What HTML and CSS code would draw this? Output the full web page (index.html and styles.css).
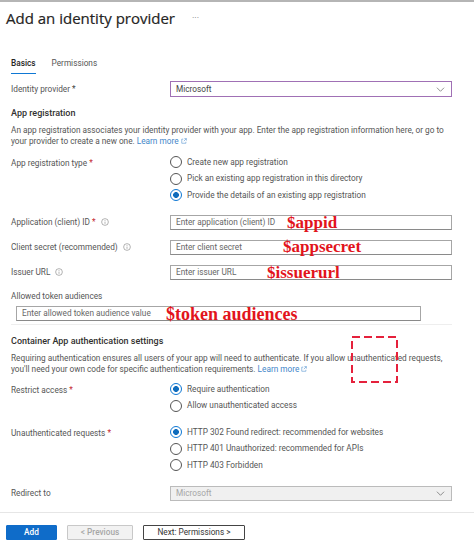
FILE: index.html
```html
<!DOCTYPE html>
<html lang="en">
<head>
<meta charset="utf-8">
<title>Add an identity provider</title>
<link rel="stylesheet" href="styles.css">
</head>
<body>
<div class="topline"></div>
<header class="title-row">
  <h1>Add an identity provider</h1>
  <span class="dots">···</span>
</header>
<main class="content">
  <nav class="tabs">
    <span class="tab active">Basics</span>
    <span class="tab">Permissions</span>
  </nav>

  <div class="row row-provider">
    <label class="lbl">Identity provider <b class="dark">*</b></label>
    <div class="field select"><span>Microsoft</span>
      <svg class="chev" viewBox="0 0 12 7"><path d="M1 1l5 5 5-5"/></svg></div>
  </div>

  <h2 class="h-app">App registration</h2>
  <p class="desc">An app registration associates your identity provider with your app. Enter the app registration information here, or go to your provider to create a new one. <a>Learn more <svg class="ext" viewBox="0 0 8 8"><path d="M3 1.500H1v5.500h5.500V5M4.500.8h2.700v2.700M7 1L3.800 4.200"/></svg></a></p>

  <div class="row row-type">
    <label class="lbl">App registration type <b>*</b></label>
    <div class="radios">
      <div class="radio"><i></i>Create new app registration</div>
      <div class="radio"><i></i>Pick an existing app registration in this directory</div>
      <div class="radio on"><i></i>Provide the details of an existing app registration</div>
    </div>
  </div>

  <div class="row row-input r1">
    <label class="lbl">Application (client) ID <b>*</b> <svg class="info" viewBox="0 0 10 10"><circle cx="5" cy="5" r="4.200"/><path d="M5 4.500v2.800M5 2.500v1"/></svg></label>
    <div class="field"><span class="ph">Enter application (client) ID</span><span class="note n1">$appid</span></div>
  </div>
  <div class="row row-input r2">
    <label class="lbl">Client secret (recommended) <svg class="info" viewBox="0 0 10 10"><circle cx="5" cy="5" r="4.200"/><path d="M5 4.500v2.800M5 2.500v1"/></svg></label>
    <div class="field"><span class="ph">Enter client secret</span><span class="note n2">$appsecret</span></div>
  </div>
  <div class="row row-input r3">
    <label class="lbl">Issuer URL <svg class="info" viewBox="0 0 10 10"><circle cx="5" cy="5" r="4.200"/><path d="M5 4.500v2.800M5 2.500v1"/></svg></label>
    <div class="field"><span class="ph">Enter issuer URL</span><span class="note n3">$issuerurl</span></div>
  </div>

  <label class="lbl lbl-aud">Allowed token audiences</label>
  <div class="field aud"><span class="ph">Enter allowed token audience value</span><span class="note n4">$token audiences</span></div>
  <div class="rule"></div>

  <h2 class="h-auth">Container App authentication settings</h2>
  <div class="desc-wrap">
    <p class="desc">Requiring authentication ensures all users of your app will need to authenticate. If you allow unauthenticated requests, you'll need your own code for specific authentication requirements. <a>Learn more <svg class="ext" viewBox="0 0 8 8"><path d="M3 1.500H1v5.500h5.500V5M4.500.8h2.700v2.700M7 1L3.800 4.200"/></svg></a></p>
    <svg class="dashed" viewBox="0 0 47 47"><rect x="1" y="1" width="45" height="45"/></svg>
  </div>

  <div class="row row-restrict">
    <label class="lbl">Restrict access <b>*</b></label>
    <div class="radios">
      <div class="radio on"><i></i>Require authentication</div>
      <div class="radio"><i></i>Allow unauthenticated access</div>
    </div>
  </div>
  <div class="row row-unauth">
    <label class="lbl">Unauthenticated requests <b>*</b></label>
    <div class="radios">
      <div class="radio on"><i></i>HTTP 302 Found redirect: recommended for websites</div>
      <div class="radio"><i></i>HTTP 401 Unauthorized: recommended for APIs</div>
      <div class="radio"><i></i>HTTP 403 Forbidden</div>
    </div>
  </div>
  <div class="row row-redirect">
    <label class="lbl">Redirect to</label>
    <div class="field select disabled"><span>Microsoft</span>
      <svg class="chev" viewBox="0 0 12 7"><path d="M1 1l5 5 5-5"/></svg></div>
  </div>
</main>
<footer class="footer">
  <button class="btn primary">Add</button>
  <button class="btn prev">&lt; Previous</button>
  <button class="btn next">Next: Permissions &gt;</button>
</footer>
</body>
</html>
```
FILE: styles.css
```css
* { box-sizing: border-box; }
html, body { margin: 0; padding: 0; }
body {
  width: 474px;
  height: 545px;
  overflow: hidden;
  background: #fff;
  color: #3b3a39;
  font-family: Roboto, "Open Sans", "Liberation Sans", sans-serif;
  font-size: 8.25px;
  line-height: 11px;
}
.topline { height: 2px; background: #b5b5b5; }
.title-row { display: flex; align-items: center; height: 32px; padding: 0 0 0 6px; }
h1 { margin: 0; font-family: "Open Sans", sans-serif; font-size: 15px; font-weight: 400; color: #252423; -webkit-text-stroke: .2px #252423; line-height: 32px; }
.dots { margin-left: 17px; color: #777; font-size: 9px; }
.content { padding: 0 22px 0 11px; }
.tabs { display: flex; gap: 16px; margin-top: 21px; height: 20px; }
.tab { height: 19px; line-height: 16px; color: #555; }
.tab.active { color: #252423; font-weight: 500; border-bottom: 1.500px solid #0f78d4; }
.row { display: flex; align-items: flex-start; }
.lbl { display: block; width: 159px; flex: none; color: #555; }
.lbl b { color: #c4262e; font-weight: 400; }
.lbl b.dark { color: #444; }
.field {
  position: relative;
  flex: 1;
  height: 15px;
  display: flex;
  align-items: center;
  padding: 0 5px;
  border: 1px solid #a6a6a6;
  border-bottom-color: #8a8a8a;
  background: #fff;
  color: #444;
}
.select { justify-content: space-between; }
.ph { color: #666; }
.chev { width: 9px; height: 5px; margin-right: 1px; fill: none; stroke: #666; stroke-width: 1; }
.row-provider { margin-top: 6px; }
.row-provider .lbl { line-height: 16px; }
.row-provider .field { height: 16px; border-color: #a070b5; }
h2 { margin: 0; font-size: 9px; font-weight: 500; color: #323130; line-height: 11px; }
.h-app { margin-top: 11px; }
.desc { margin: 6px 0 0; line-height: 11px; color: #555; }
.desc a { color: #3f86c9; }
.ext { width: 6px; height: 6px; fill: none; stroke: #3f86c9; stroke-width: .7; }
.row-type { margin-top: 9px; }
.row-type .lbl { padding-top: 2px; }
.radios { display: flex; flex-direction: column; gap: 4.500px; }
.radio { display: flex; align-items: center; height: 12px; gap: 5px; color: #555; white-space: nowrap; }
.radio i { flex: none; width: 12px; height: 12px; border: 1px solid #555; border-radius: 50%; background: #fff; }
.radio.on i { border-color: #0f78d4; background: radial-gradient(circle, #0f6cbd 0 2.600px, #fff 3.200px); }
.row-input { align-items: center; height: 15px; }
.r1 { margin-top: 14px; }
.r2 { margin-top: 10px; }
.r3 { margin-top: 10px; }
.info { width: 8px; height: 8px; margin-left: 3px; vertical-align: -1px; fill: none; stroke: #777; stroke-width: .7; }
.note {
  position: absolute;
  top: -3px;
  color: #e2141c;
  font-family: "Liberation Serif", serif;
  font-weight: 700;
  font-size: 17px;
  line-height: 20px;
  white-space: nowrap;
}
.n1 { left: 116px; }
.n2 { left: 112px; top: -4px; }
.n3 { left: 96px; }
.n4 { left: 149px; font-size: 18px; }
.lbl-aud { width: auto; margin-top: 10.500px; }
.aud { margin: 4.500px 31px 0 5px; flex: none; }
.rule { height: 1px; background: #eee; margin-top: 3px; }
.h-auth { margin-top: 10.500px; }
.desc-wrap { position: relative; }
.dashed {
  position: absolute;
  left: 340px;
  top: -16.500px;
  width: 47px;
  height: 47px;
  fill: none;
  stroke: #e5213c;
  stroke-width: 2;
  stroke-dasharray: 8 4;
}
.row-restrict { margin-top: 8.500px; }
.row-restrict .lbl { padding-top: 2px; }
.row-unauth { margin-top: 14.500px; }
.row-unauth .lbl { padding-top: 2px; }
.row-redirect { margin-top: 15px; align-items: center; }
.disabled { background: #f0f0f0; color: #a6a6a6; border-color: #bbb; }
.footer {
  margin-top: 11px;
  display: flex;
  gap: 10px;
  padding: 12px 0 0 6px;
  border-top: 1px solid #e6e6e6;
}
.btn {
  height: 15px;
  padding: 0;
  border-radius: 1px;
  font: 500 8.25px/13px Roboto, "Open Sans", sans-serif;
}
.primary { width: 51px; background: #0f6cc9; border: 1px solid #0f6cc9; color: #fff; }
.prev { width: 66px; background: #f2f2f2; border: 1px solid #c8c8c8; color: #a6a6a6; }
.next { width: 102px; background: #fff; border: 1px solid #444; color: #333; font-weight: 400; }
```
